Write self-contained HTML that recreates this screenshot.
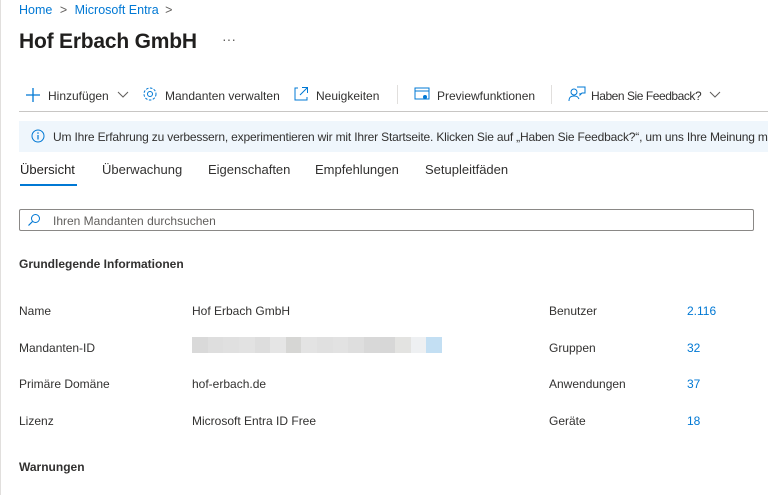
<!DOCTYPE html>
<html><head><meta charset="utf-8"><style>
*{margin:0;padding:0;box-sizing:border-box}
body{width:768px;height:495px;overflow:hidden;background:#fff;font-family:"Liberation Sans",sans-serif;color:#323130;position:relative}
.a{position:absolute;white-space:nowrap}
.lnk{color:#0078d4}
.s12{font-size:12px}
.s13{font-size:13px}
</style></head><body>
<div class="a" style="left:0;top:0;width:1px;height:495px;background:#e1dfdd"></div>
<div class="a s12" style="left:19px;top:3px;color:#0078d4;font-size:12.5px">Home <span style="color:#605e5c;margin:0 4px">&gt;</span> Microsoft Entra <span style="color:#605e5c;margin-left:3px">&gt;</span></div>
<div class="a" style="left:19px;top:30px;font-size:21px;font-weight:bold;color:#201f1e;letter-spacing:-0.2px">Hof Erbach GmbH</div>
<div class="a" style="left:222px;top:31px;font-size:14px;color:#605e5c">···</div>

<!-- toolbar -->
<svg class="a" style="left:25px;top:87px" width="16" height="16"><path d="M8 1v14M1 8h14" stroke="#0078d4" stroke-width="1.3"/></svg>
<div class="a s12" style="left:48px;top:89px">Hinzufügen</div>
<svg class="a" style="left:117px;top:90px" width="12" height="10"><path d="M1 2l5 5 5-5" stroke="#605e5c" fill="none"/></svg>
<svg class="a" style="left:142px;top:86px" width="16" height="16"><circle cx="8" cy="8" r="2.5" stroke="#0078d4" fill="none"/><circle cx="8" cy="8" r="6" stroke="#0078d4" fill="none" stroke-dasharray="2.5 1.5"/></svg>
<div class="a s12" style="left:165px;top:89px">Mandanten verwalten</div>
<svg class="a" style="left:293px;top:86px" width="16" height="16"><path d="M5 2H2v12h12v-3M9 1.5h5.5V7M14.5 1.5L7 9" stroke="#0078d4" fill="none"/></svg>
<div class="a s12" style="left:316px;top:89px">Neuigkeiten</div>
<div class="a" style="left:397px;top:85px;width:1px;height:19px;background:#e1dfdd"></div>
<svg class="a" style="left:414px;top:86px" width="16" height="16"><rect x="1" y="2" width="14" height="11" stroke="#0078d4" fill="none"/><path d="M1 5h14" stroke="#0078d4"/><circle cx="11" cy="11" r="2" fill="#0078d4"/></svg>
<div class="a s12" style="left:437px;top:89px">Previewfunktionen</div>
<div class="a" style="left:551px;top:85px;width:1px;height:19px;background:#e1dfdd"></div>
<svg class="a" style="left:568px;top:86px" width="18" height="16"><circle cx="6" cy="6" r="3" stroke="#0078d4" fill="none"/><path d="M1 15c0-4 2-5 5-5s4 1 5 3M9 1h8v6h-3l-2 2V7" stroke="#0078d4" fill="none"/></svg>
<div class="a s12" style="left:591px;top:89px;letter-spacing:-0.45px">Haben Sie Feedback?</div>
<svg class="a" style="left:709px;top:90px" width="12" height="10"><path d="M1 2l5 5 5-5" stroke="#605e5c" fill="none"/></svg>
<div class="a" style="left:19px;top:111px;width:749px;height:1px;background:#c8c6c4"></div>

<!-- info banner -->
<div class="a" style="left:19px;top:121px;width:749px;height:31px;background:#eff6fc"></div>
<svg class="a" style="left:31px;top:129px" width="14" height="14"><circle cx="7" cy="7" r="6" stroke="#0078d4" fill="none"/><path d="M7 6v4.5" stroke="#0078d4" stroke-width="1.2"/><circle cx="7" cy="4" r=".8" fill="#0078d4"/></svg>
<div class="a s12" style="left:53px;top:130px;width:715px;overflow:hidden;letter-spacing:-0.18px">Um Ihre Erfahrung zu verbessern, experimentieren wir mit Ihrer Startseite. Klicken Sie auf „Haben Sie Feedback?“, um uns Ihre Meinung mitzuteilen.</div>

<!-- tabs -->
<div class="a s13" style="left:20px;top:162px;color:#201f1e">Übersicht</div>
<div class="a" style="left:20px;top:184px;width:57px;height:2px;background:#0078d4"></div>
<div class="a s13" style="left:102px;top:162px">Überwachung</div>
<div class="a s13" style="left:208px;top:162px">Eigenschaften</div>
<div class="a s13" style="left:315px;top:162px">Empfehlungen</div>
<div class="a s13" style="left:425px;top:162px">Setupleitfäden</div>

<!-- search -->
<div class="a" style="left:19px;top:209px;width:735px;height:22px;border:1px solid #8a8886;border-radius:2px"></div>
<svg class="a" style="left:27px;top:213px" width="14" height="14"><circle cx="8.5" cy="5.5" r="4" stroke="#0078d4" fill="none"/><path d="M5.5 8.5L1.5 12.5" stroke="#0078d4" stroke-width="1.2"/></svg>
<div class="a s12" style="left:53px;top:214px;color:#605e5c">Ihren Mandanten durchsuchen</div>

<div class="a s12" style="left:19px;top:257px;font-weight:bold;color:#323130">Grundlegende Informationen</div>

<div class="a s12" style="left:19px;top:304px">Name</div>
<div class="a s12" style="left:192px;top:304px">Hof Erbach GmbH</div>
<div class="a s12" style="left:19px;top:341px">Mandanten-ID</div>
<div class="a" style="left:192px;top:337px;height:16px;width:250px;display:flex">
<span style="flex:1;background:#d9d9d9"></span><span style="flex:1;background:#dedede"></span><span style="flex:1;background:#e0e0e0"></span><span style="flex:1;background:#e2e2e2"></span><span style="flex:1;background:#dddddd"></span><span style="flex:1;background:#e5e5e5"></span><span style="flex:1;background:#d6d6d4"></span><span style="flex:1;background:#e3e3e3"></span><span style="flex:1;background:#e0e0e0"></span><span style="flex:1;background:#e2e2e2"></span><span style="flex:1;background:#dedede"></span><span style="flex:1;background:#d8d8d8"></span><span style="flex:1;background:#d7d7d7"></span><span style="flex:1;background:#e3e3e1"></span><span style="flex:1;background:#eef0f2"></span><span style="flex:1;background:#c3dff3"></span>
</div>
<div class="a s12" style="left:19px;top:377px">Primäre Domäne</div>
<div class="a s12" style="left:192px;top:377px">hof-erbach.de</div>
<div class="a s12" style="left:19px;top:414px">Lizenz</div>
<div class="a s12" style="left:192px;top:414px">Microsoft Entra ID Free</div>

<div class="a s12" style="left:549px;top:304px">Benutzer</div>
<div class="a s12 lnk" style="left:687px;top:304px">2.116</div>
<div class="a s12" style="left:549px;top:341px">Gruppen</div>
<div class="a s12 lnk" style="left:687px;top:341px">32</div>
<div class="a s12" style="left:549px;top:377px">Anwendungen</div>
<div class="a s12 lnk" style="left:687px;top:377px">37</div>
<div class="a s12" style="left:549px;top:414px">Geräte</div>
<div class="a s12 lnk" style="left:687px;top:414px">18</div>

<div class="a s12" style="left:19px;top:460px;font-weight:bold">Warnungen</div>
</body></html>
